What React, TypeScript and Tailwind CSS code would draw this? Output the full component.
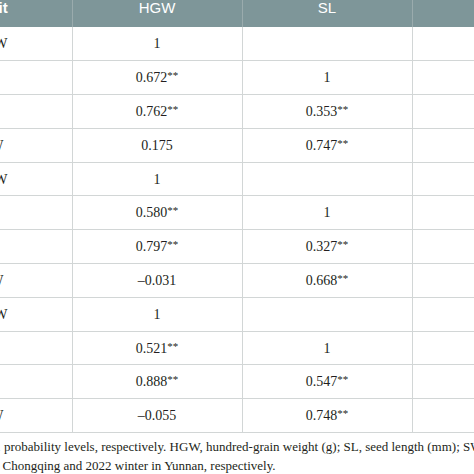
export default function App() {
  const groups = [
    [
      ["HGW", "1", "", ""],
      ["SL", "0.672**", "1", ""],
      ["SW", "0.762**", "0.353**", ""],
      ["LSW", "0.175", "0.747**", "1"],
    ],
    [
      ["HGW", "1", "", ""],
      ["SL", "0.580**", "1", ""],
      ["SW", "0.797**", "0.327**", ""],
      ["LSW", "–0.031", "0.668**", "1"],
    ],
    [
      ["HGW", "1", "", ""],
      ["SL", "0.521**", "1", ""],
      ["SW", "0.888**", "0.547**", ""],
      ["LSW", "–0.055", "0.748**", "1"],
    ],
  ];
  const rows = groups.flat();

  const renderValue = (v: string) => {
    if (!v.endsWith("**")) return v;
    return (
      <>
        {v.slice(0, -2)}
        <span className="relative top-[-3px] text-[11px]">**</span>
      </>
    );
  };

  return (
    <div className="w-[474px] h-[474px] overflow-hidden bg-white">
      <div className="-ml-[48px] w-[630px]">
        <table
          className="table-fixed border-collapse w-[630px] text-[14px] text-[#231f20]"
          style={{ fontFamily: '"Liberation Serif", serif' }}
        >
          <colgroup>
            <col className="w-[120px]" />
            <col className="w-[170px]" />
            <col className="w-[170px]" />
            <col className="w-[170px]" />
          </colgroup>
          <thead>
            <tr
              className="h-[27px] bg-[#7e9699] text-white text-[15px] leading-[15px]"
              style={{ fontFamily: '"Liberation Sans", sans-serif' }}
            >
              <th className="align-top text-left pl-[24px] font-bold border-r border-[#9aabad]">Trait</th>
              <th className="align-top font-normal border-x border-[#9aabad]">HGW</th>
              <th className="align-top font-normal border-x border-[#9aabad]">SL</th>
              <th className="align-top font-normal border-l border-[#9aabad]">SW</th>
            </tr>
          </thead>
          <tbody>
            {rows.map((r, i) => (
              <tr key={i} className="h-[33.8px]">
                <td className="text-left pl-[22px] border-b border-r border-[#d2d6d6] whitespace-nowrap">{r[0]}</td>
                <td className="text-center border border-t-0 border-[#d2d6d6]">{renderValue(r[1])}</td>
                <td className="text-center border border-t-0 border-[#d2d6d6]">{renderValue(r[2])}</td>
                <td className="text-center border-b border-l border-[#d2d6d6]">{renderValue(r[3])}</td>
              </tr>
            ))}
          </tbody>
        </table>
      </div>
      <div
        className="mt-[4px] text-[13px] leading-[19px] text-[#231f20] whitespace-nowrap"
        style={{ fontFamily: '"Liberation Serif", serif' }}
      >
        <p className="-ml-[70px]">
          0.05 and 0.01 probability levels, respectively. HGW, hundred-grain weight (g); SL, seed length (mm); SW, seed width (mm).
        </p>
        <p className="-ml-[56px]">summer in Chongqing and 2022 winter in Yunnan, respectively.</p>
      </div>
    </div>
  );
}
